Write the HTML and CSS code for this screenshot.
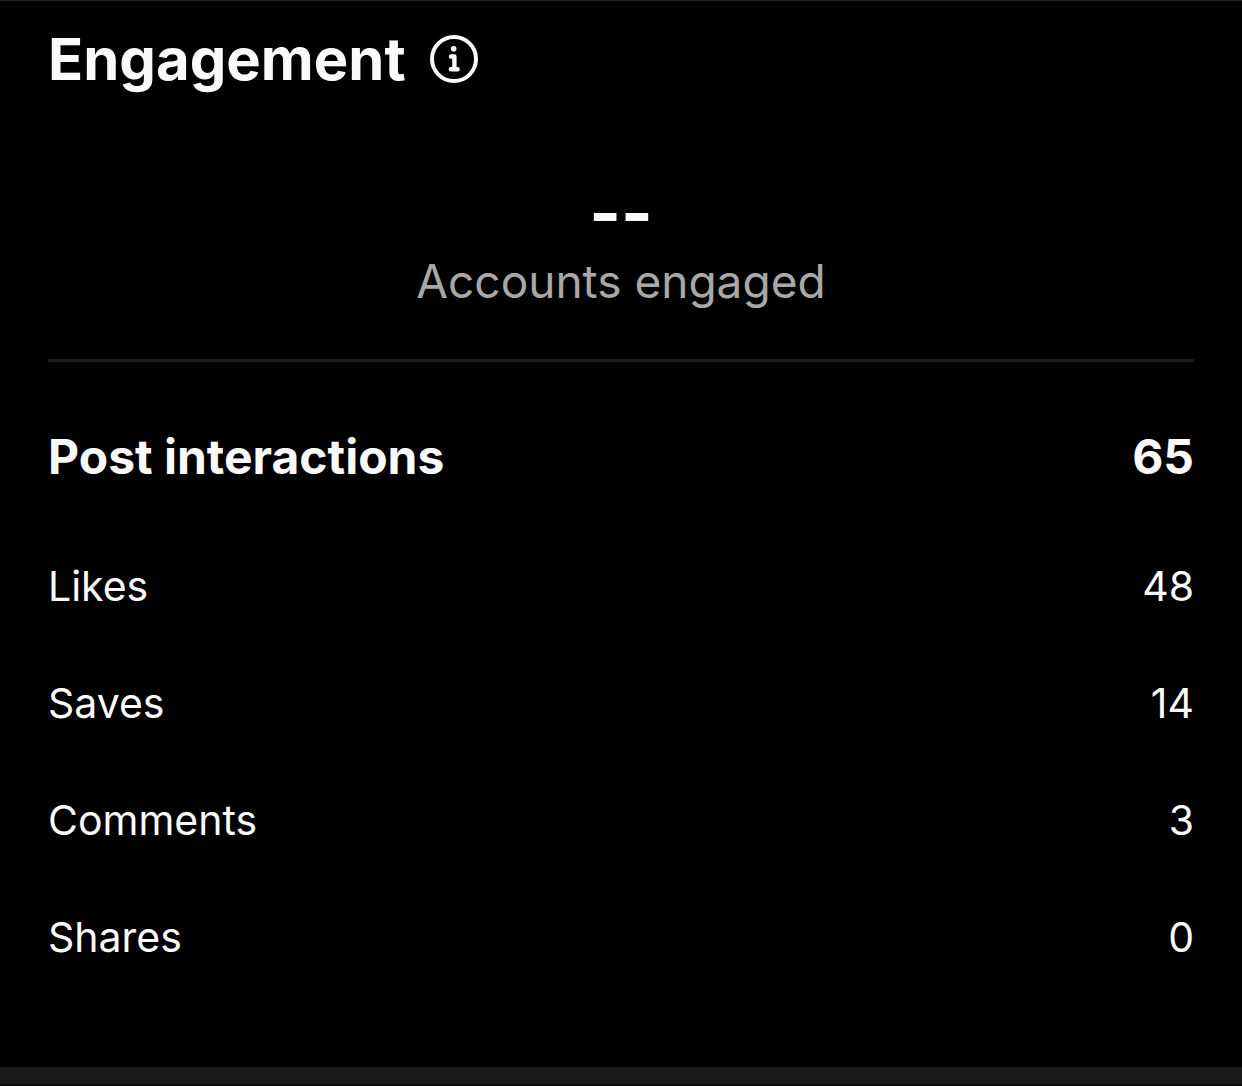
FILE: index.html
```html
<!DOCTYPE html>
<html lang="en">
<head>
    <meta charset="UTF-8">
    <meta name="viewport" content="width=device-width, initial-scale=1.0">
    <title>Engagement</title>
    <link rel="stylesheet" href="styles.css">
</head>
<body>

    <main class="insights">
        <header class="heading">
            <h1>Engagement</h1>
            <button class="info" type="button" aria-label="About engagement">
                <svg viewBox="0 0 48 48" fill="none" stroke="currentColor">
                    <circle cx="24" cy="24" r="22" stroke-width="4"/>
                    <circle cx="23.7" cy="13.7" r="2.8" fill="currentColor" stroke="none"/>
                    <path d="M21 21.5h3.4v12.8M20.9 34.3h6.7" stroke-width="4.4" stroke-linecap="round" stroke-linejoin="round"/>
                </svg>
            </button>
        </header>

        <section class="accounts">
            <p class="total">--</p>
            <p class="caption">Accounts engaged</p>
        </section>

        <table class="interactions">
            <thead>
                <tr><th scope="col">Post interactions</th><th scope="col">65</th></tr>
            </thead>
            <tbody>
                <tr><td>Likes</td><td>48</td></tr>
                <tr><td>Saves</td><td>14</td></tr>
                <tr><td>Comments</td><td>3</td></tr>
                <tr><td>Shares</td><td>0</td></tr>
            </tbody>
        </table>
    </main>

</body>
</html>
```

FILE: styles.css
```css
body {
    font-family: Inter, sans-serif;
    background-color: #000;
    color: #fafafa;
    margin: 0;
}
h1, p {
    margin: 0;
}
.insights {
    padding: 23px 48px 72px;
    border-top: 1px solid #262626;
    border-bottom: 18px solid #1a1a1a;
}
.heading {
    display: flex;
    align-items: center;
    gap: 24px;
}
h1 {
    font-size: 58px;
    line-height: 70px;
    font-weight: 700;
}
.info {
    width: 48px;
    height: 48px;
    padding: 0;
    border: none;
    background: none;
    color: inherit;
    cursor: pointer;
}
.info svg {
    display: block;
}
.accounts {
    padding: 79px 0 48px;
    border-bottom: 3px solid #1a1a1a;
    text-align: center;
}
.total {
    font-size: 68px;
    line-height: 78px;
    font-weight: 700;
}
.caption {
    color: #a8a8a8;
    font-size: 46px;
    line-height: 60px;
}
.interactions {
    width: 100%;
    margin-top: 23px;
    border-collapse: collapse;
}
.interactions th {
    height: 142px;
    padding: 0;
    font-size: 48px;
    font-weight: 700;
    text-align: left;
}
.interactions td {
    height: 117px;
    padding: 0;
    font-size: 41px;
}
.interactions th:last-child,
.interactions td:last-child {
    text-align: right;
}
```
